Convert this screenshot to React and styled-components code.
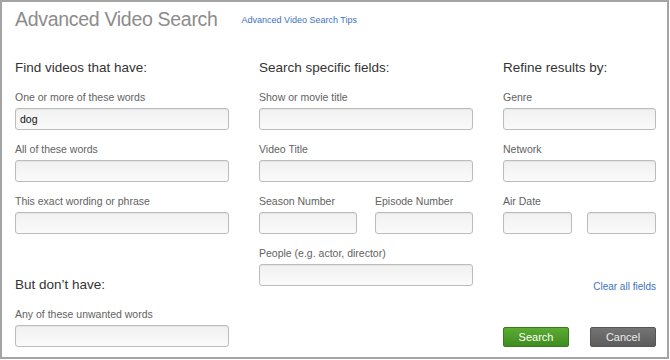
import React from 'react'
import styled, { createGlobalStyle } from 'styled-components'

const GlobalStyle = createGlobalStyle`
  body {
    margin: 0;
    background: #fff;
    font-family: "Liberation Sans", Arial, sans-serif;
  }
`

const Frame = styled.div`
  box-sizing: border-box;
  width: 669px;
  height: 359px;
  border: 2px solid #a4a4a4;
  padding: 4px 11px 10px 13px;
  display: flex;
  flex-direction: column;
  background: #fff;
`

const Header = styled.div`
  display: flex;
  align-items: center;
  gap: 24px;
`

const PageTitle = styled.h1`
  margin: 0;
  font-size: 19.5px;
  line-height: 26px;
  font-weight: 400;
  letter-spacing: -0.3px;
  color: #8c8c8c;
`

const Link = styled.a`
  font-size: ${p => p.$size || 9}px;
  line-height: 13px;
  color: #3d72c2;
  text-decoration: none;
  cursor: pointer;
`

const TipsLink = styled(Link)`
  margin-top: 2px;
`

const Columns = styled.div`
  flex: 1;
  margin-top: 27px;
  display: grid;
  grid-template-columns: 214px 214px 153px;
  column-gap: 30px;
`

const Column = styled.div`
  display: flex;
  flex-direction: column;
`

const Section = styled.div`
  display: flex;
  flex-direction: column;
  margin-top: ${p => (p.$bottom ? 'auto' : '0')};
`

const Heading = styled.h2`
  margin: 0 0 14px;
  font-size: 13.5px;
  line-height: 18px;
  font-weight: 400;
  color: #333;
`

const Field = styled.div`
  display: flex;
  flex-direction: column;
  margin-bottom: ${p => (p.$last ? 0 : 13)}px;
`

const Label = styled.label`
  font-size: 10.5px;
  line-height: 13px;
  color: #626262;
  margin-bottom: 4px;
  white-space: nowrap;
`

const Input = styled.input`
  box-sizing: border-box;
  width: 100%;
  height: 22px;
  margin: 0;
  padding: 0 4px;
  border: 1px solid #bcbcbc;
  border-radius: 3px;
  background: linear-gradient(#f1f1f1, #fafafa);
  box-shadow: inset 0 1px 1px rgba(0, 0, 0, 0.05);
  font-family: "Liberation Sans", Arial, sans-serif;
  font-size: 10.5px;
  color: #111;
  outline: none;
`

const Pair = styled.div`
  display: grid;
  grid-template-columns: 1fr 1fr;
  column-gap: ${p => p.$gap}px;
`

const Footer = styled.div`
  margin-top: auto;
  display: flex;
  flex-direction: column;
  align-items: flex-end;
`

const ClearLink = styled(Link)`
  margin-bottom: 34px;
`

const Buttons = styled.div`
  align-self: stretch;
  display: flex;
  justify-content: space-between;
`

const Button = styled.button`
  box-sizing: border-box;
  width: 66px;
  height: 20px;
  border-radius: 2px;
  border: 1px solid ${p => (p.$primary ? '#3a7a1c' : '#555')};
  background: ${p =>
    p.$primary
      ? 'linear-gradient(#5cab33, #3f8c20)'
      : 'linear-gradient(#747474, #5c5c5c)'};
  color: ${p => (p.$primary ? '#fff' : '#ececec')};
  font-family: "Liberation Sans", Arial, sans-serif;
  font-size: 11px;
  padding: 0;
  cursor: pointer;
`

function TextField({ label, value, last }) {
  return (
    <Field $last={last}>
      <Label>{label}</Label>
      <Input defaultValue={value} />
    </Field>
  )
}

function PairField({ labels, gap, last }) {
  return (
    <Field $last={last}>
      <Pair $gap={gap}>
        <Label>{labels[0]}</Label>
        <Label>{labels[1]}</Label>
        <Input />
        <Input />
      </Pair>
    </Field>
  )
}

export default function App() {
  return (
    <>
      <GlobalStyle />
      <Frame>
        <Header>
          <PageTitle>Advanced Video Search</PageTitle>
          <TipsLink>Advanced Video Search Tips</TipsLink>
        </Header>
        <Columns>
          <Column>
            <Section>
              <Heading>Find videos that have:</Heading>
              <TextField label="One or more of these words" value="dog" />
              <TextField label="All of these words" />
              <TextField label="This exact wording or phrase" />
            </Section>
            <Section $bottom>
              <Heading>But don’t have:</Heading>
              <TextField label="Any of these unwanted words" last />
            </Section>
          </Column>
          <Column>
            <Section>
              <Heading>Search specific fields:</Heading>
              <TextField label="Show or movie title" />
              <TextField label="Video Title" />
              <PairField labels={['Season Number', 'Episode Number']} gap={18} />
              <TextField label="People (e.g. actor, director)" />
            </Section>
          </Column>
          <Column>
            <Section>
              <Heading>Refine results by:</Heading>
              <TextField label="Genre" />
              <TextField label="Network" />
              <Field>
                <Label>Air Date</Label>
                <Pair $gap={15}>
                  <Input />
                  <Input />
                </Pair>
              </Field>
            </Section>
            <Footer>
              <ClearLink $size={10}>Clear all fields</ClearLink>
              <Buttons>
                <Button $primary>Search</Button>
                <Button>Cancel</Button>
              </Buttons>
            </Footer>
          </Column>
        </Columns>
      </Frame>
    </>
  )
}
